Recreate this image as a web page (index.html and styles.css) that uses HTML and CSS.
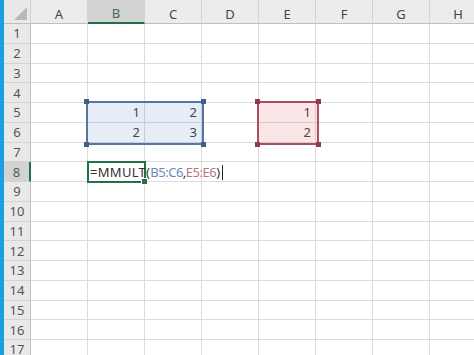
FILE: index.html
```html
<!DOCTYPE html>
<html>
<head>
<meta charset="UTF-8">
<title>Book1</title>
<link rel="stylesheet" href="styles.css">
</head>
<body>
	<div class="edge"></div>

	<!-- sheet grid -->
	<div class="sheet">
		<div class="corner"><span class="tri"></span></div>
		<div class="ch">A</div><div class="ch sel">B</div><div class="ch">C</div><div class="ch">D</div>
		<div class="ch">E</div><div class="ch">F</div><div class="ch">G</div><div class="ch">H</div>

		<div class="rh">1</div><div class="c"></div><div class="c"></div><div class="c"></div><div class="c"></div><div class="c"></div><div class="c"></div><div class="c"></div><div class="c"></div>
		<div class="rh">2</div><div class="c"></div><div class="c"></div><div class="c"></div><div class="c"></div><div class="c"></div><div class="c"></div><div class="c"></div><div class="c"></div>
		<div class="rh">3</div><div class="c"></div><div class="c"></div><div class="c"></div><div class="c"></div><div class="c"></div><div class="c"></div><div class="c"></div><div class="c"></div>
		<div class="rh">4</div><div class="c"></div><div class="c"></div><div class="c"></div><div class="c"></div><div class="c"></div><div class="c"></div><div class="c"></div><div class="c"></div>

		<div class="rh">5</div><div class="c"></div>
		<div class="c num">1
			<div class="range blue">
				<span class="h tl"></span><span class="h tr"></span><span class="h bl"></span><span class="h br"></span>
			</div>
		</div>
		<div class="c num">2</div><div class="c"></div>
		<div class="c num">1
			<div class="range red one">
				<span class="h tl"></span><span class="h tr"></span><span class="h bl"></span><span class="h br"></span>
			</div>
		</div>
		<div class="c"></div><div class="c"></div><div class="c"></div>

		<div class="rh">6</div><div class="c"></div><div class="c num">2</div><div class="c num">3</div><div class="c"></div><div class="c num">2</div><div class="c"></div><div class="c"></div><div class="c"></div>
		<div class="rh">7</div><div class="c"></div><div class="c"></div><div class="c"></div><div class="c"></div><div class="c"></div><div class="c"></div><div class="c"></div><div class="c"></div>

		<div class="rh sel">8</div><div class="c"></div>
		<div class="c active">
			<span class="formula"><span class="fn">=MMULT(</span><span class="args"><span class="ref-b">B5:C6</span>,<span class="ref-e">E5:E6</span>)</span><i class="caret"></i></span>
			<span class="fill"></span>
		</div>
		<div class="c"></div><div class="c"></div><div class="c"></div><div class="c"></div><div class="c"></div><div class="c"></div>

		<div class="rh">9</div><div class="c"></div><div class="c"></div><div class="c"></div><div class="c"></div><div class="c"></div><div class="c"></div><div class="c"></div><div class="c"></div>
		<div class="rh">10</div><div class="c"></div><div class="c"></div><div class="c"></div><div class="c"></div><div class="c"></div><div class="c"></div><div class="c"></div><div class="c"></div>
		<div class="rh">11</div><div class="c"></div><div class="c"></div><div class="c"></div><div class="c"></div><div class="c"></div><div class="c"></div><div class="c"></div><div class="c"></div>
		<div class="rh">12</div><div class="c"></div><div class="c"></div><div class="c"></div><div class="c"></div><div class="c"></div><div class="c"></div><div class="c"></div><div class="c"></div>
		<div class="rh">13</div><div class="c"></div><div class="c"></div><div class="c"></div><div class="c"></div><div class="c"></div><div class="c"></div><div class="c"></div><div class="c"></div>
		<div class="rh">14</div><div class="c"></div><div class="c"></div><div class="c"></div><div class="c"></div><div class="c"></div><div class="c"></div><div class="c"></div><div class="c"></div>
		<div class="rh">15</div><div class="c"></div><div class="c"></div><div class="c"></div><div class="c"></div><div class="c"></div><div class="c"></div><div class="c"></div><div class="c"></div>
		<div class="rh">16</div><div class="c"></div><div class="c"></div><div class="c"></div><div class="c"></div><div class="c"></div><div class="c"></div><div class="c"></div><div class="c"></div>
		<div class="rh">17</div><div class="c"></div><div class="c"></div><div class="c"></div><div class="c"></div><div class="c"></div><div class="c"></div><div class="c"></div><div class="c"></div>
	</div>
</body>
</html>
```

FILE: styles.css
```css
body {
  margin: 0;
  width: 474px;
  height: 355px;
  overflow: hidden;
  display: flex;
  background-color: #fff;
  font-family: "Noto Sans", "Liberation Sans", sans-serif;
  font-size: 13px;
  color: #333;
}

/* blue strip at the left edge */
.edge {
  flex-shrink: 0;
  width: 4px;
  background-color: #1a9fe0;
}

.sheet {
  flex-shrink: 0;
  display: grid;
  grid-template-columns: 27px repeat(8, 57px);
  grid-template-rows: 24px;
  grid-auto-rows: 19.76px;
}

.sheet > div {
  box-sizing: border-box;
}

/* headers */
.corner {
  position: relative;
  background-color: #e9e9e9;
  border-right: 1px solid #cfcfcf;
  border-bottom: 1px solid #bfbfbf;
}

.tri {
  position: absolute;
  right: 3px;
  bottom: 3px;
  width: 13px;
  height: 13px;
  background-color: #b9b9b9;
  clip-path: polygon(100% 0, 100% 100%, 0 100%);
}

.ch {
  display: flex;
  align-items: center;
  justify-content: center;
  padding-top: 4px;
  background-color: #ececec;
  border-right: 1px solid #d4d4d4;
  border-bottom: 1px solid #bfbfbf;
  color: #444;
  font-size: 13px;
}

.ch.sel {
  background-color: #d3d3d3;
  border-bottom: 2px solid #217346;
  color: #3f6a50;
}

.rh {
  display: flex;
  align-items: center;
  justify-content: center;
  background-color: #e9e9e9;
  border-right: 1px solid #bfbfbf;
  border-bottom: 1px solid #d4d4d4;
  color: #555;
  font-size: 13px;
}

.rh.sel {
  background-color: #d3d3d3;
  border-right: 2px solid #217346;
  color: #3f6a50;
}

/* cells */
.c {
  position: relative;
  border-right: 1px solid #dcdcdc;
  border-bottom: 1px solid #dcdcdc;
}

.num {
  display: flex;
  align-items: center;
  justify-content: flex-end;
  padding-right: 4px;
  color: #444;
}

/* range highlight boxes */
.range {
  position: absolute;
  left: -2px;
  top: -2px;
  width: calc(200% + 2px);
  height: calc(200% + 2px);
  border: 2px solid;
  z-index: 2;
}

.range.one {
  width: calc(100% + 2px);
}

.range.blue {
  border-color: #5676a0;
  background-color: rgba(60, 110, 190, 0.12);
}

.range.red {
  border-color: #a9505e;
  background-color: rgba(225, 60, 70, 0.13);
}

.h {
  position: absolute;
  width: 5px;
  height: 5px;
}

.blue .h {
  background-color: #3f5f88;
}

.red .h {
  background-color: #94394a;
}

.tl { left: -4px; top: -4px; }
.tr { right: -4px; top: -4px; }
.bl { left: -4px; bottom: -4px; }
.br { right: -4px; bottom: -4px; }

/* active cell with the formula being typed */
.active {
  border: none;
  outline: 2px solid #217346;
  outline-offset: -1px;
  z-index: 3;
}

.formula {
  position: absolute;
  left: 2px;
  top: 0;
  height: 100%;
  display: flex;
  align-items: center;
  white-space: nowrap;
  color: #333;
}

.fn {
  letter-spacing: 0.3px;
}

.args {
  letter-spacing: -0.5px;
}

.ref-b {
  color: #6b8cb4;
}

.ref-e {
  color: #c07580;
}

.caret {
  display: inline-block;
  width: 1px;
  height: 15px;
  margin-left: 2px;
  background-color: #222;
}

.fill {
  position: absolute;
  right: -3px;
  bottom: -3px;
  width: 5px;
  height: 5px;
  background-color: #217346;
  border: 1px solid #fff;
}
```
